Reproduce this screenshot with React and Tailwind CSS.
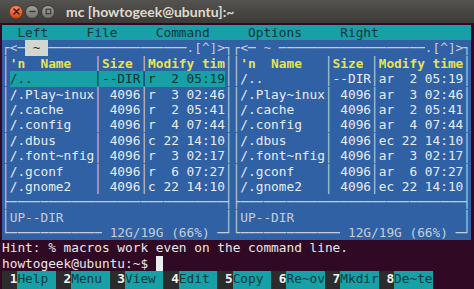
const BG_TERM = 'bg-[#300a24]';

// segment styles
const B = 'bg-[#3061a5] text-[#c6cdd9]';
const F = 'bg-[#3061a5] text-[#e8ecf1]';
const H = 'bg-[#3061a5] text-[#e9e154] font-bold';
const SEL = 'bg-[#17a1a6] text-[#0f3238]';
const TAB = 'bg-[#d3d7cf] text-[#2a2a2a]';
const MENU = 'bg-[#17a1a6] text-[#10343a]';
const T = 'text-[#ebe6e9]';
const CUR = 'bg-[#ececec] text-[#ececec]';
const KEY = 'bg-[#2d2b2c] text-[#f4f4f4] font-bold';
const LBL = 'bg-[#17a1a6] text-[#0f3a40]';

const pad = (s, n) => s.padEnd(n, ' ');
const dash = (n) => '─'.repeat(n);

const files = [
  ['/.Play~inux', '4096', 'r  3 02:46', 'ar  3 02:46'],
  ['/.cache', '4096', 'r  2 05:41', 'ar  2 05:41'],
  ['/.config', '4096', 'r  4 07:44', 'ar  4 07:44'],
  ['/.dbus', '4096', 'c 22 14:10', 'ec 22 14:10'],
  ['/.font~nfig', '4096', 'r  3 02:17', 'ar  3 02:17'],
  ['/.gconf', '4096', 'r  6 07:27', 'ar  6 07:27'],
  ['/.gnome2', '4096', 'c 22 14:10', 'ec 22 14:10'],
];

function Row({ segs, last }) {
  const cells = [];
  segs.forEach(([text, cls], si) => {
    [...text].forEach((ch, ci) => {
      cells.push(
        <span key={`${si}-${ci}`} className={`block overflow-visible ${cls}`}>
          {ch === ' ' ? '\u00a0' : ch}
        </span>
      );
    });
  });
  return (
    <div
      className={`grid grid-cols-[repeat(61,7.7px)] ${
        last ? 'flex-1 auto-rows-[minmax(15.4px,1fr)]' : 'h-[15.4px] auto-rows-[15.4px]'
      }`}
    >
      {cells}
    </div>
  );
}

function TitleBar() {
  return (
    <div className="h-[23px] flex items-center bg-gradient-to-b from-[#55534f] to-[#3c3b37]">
      <div className="flex items-center gap-[2px] ml-[9px]">
        <div className="w-[14px] h-[14px] rounded-full bg-gradient-to-b from-[#f58a5c] to-[#dd4814] border border-[#8a3414] flex items-center justify-center">
          <svg width="7" height="7" viewBox="0 0 7 7">
            <path d="M1 1L6 6M6 1L1 6" stroke="#4a1a08" strokeWidth="1.6" strokeLinecap="round" />
          </svg>
        </div>
        <div className="w-[14px] h-[14px] rounded-full bg-gradient-to-b from-[#a3a19b] to-[#75736e] border border-[#3a3935] flex items-center justify-center">
          <svg width="7" height="7" viewBox="0 0 7 7">
            <path d="M1 3.5H6" stroke="#3a3935" strokeWidth="1.6" strokeLinecap="round" />
          </svg>
        </div>
        <div className="w-[14px] h-[14px] rounded-full bg-gradient-to-b from-[#a3a19b] to-[#75736e] border border-[#3a3935] flex items-center justify-center">
          <svg width="7" height="7" viewBox="0 0 7 7">
            <rect x="1.2" y="1.2" width="4.6" height="4.6" fill="none" stroke="#3a3935" strokeWidth="1.2" />
          </svg>
        </div>
      </div>
      <span className="ml-[11px] text-[14px] font-bold text-[#dfdbd2] font-['Lato',sans-serif] leading-none">
        mc [howtogeek@ubuntu]:~
      </span>
    </div>
  );
}

export default function App() {
  const rows = [];

  rows.push([[pad('  Left     File     Command     Options     Right', 61), MENU]]);

  rows.push([
    ['┌<─', B], [' ~ ', TAB], [dash(18), B], ['.[^]>┐', B],
    ['┌<─ ~ ', B], [dash(19), B], ['.[^]>┐', B],
  ]);

  rows.push([
    ['│', B], [pad("'n  Name", 11), H], ['│', B], ['Size ', H], ['│', B], ['Modify tim', H], ['│', B],
    ['│', B], [pad("'n  Name", 11), H], ['│', B], ['Size ', H], ['│', B], ['Modify time', H], ['│', B],
  ]);

  rows.push([
    ['│', B], [pad('/..', 11), SEL], ['│', SEL], ['--DIR', SEL], ['│', SEL], ['r  2 05:19', SEL], ['│', B],
    ['│', B], [pad('/..', 11), F], ['│', B], ['--DIR', F], ['│', B], ['ar  2 05:19', F], ['│', B],
  ]);

  files.forEach(([name, size, t1, t2]) => {
    rows.push([
      ['│', B], [pad(name, 11), F], ['│', B], [size.padStart(5), F], ['│', B], [t1, F], ['│', B],
      ['│', B], [pad(name, 11), F], ['│', B], [size.padStart(5), F], ['│', B], [t2, F], ['│', B],
    ]);
  });

  rows.push([['├' + dash(28) + '┤', B], ['├' + dash(29) + '┤', B]]);

  rows.push([
    ['│', B], [pad('UP--DIR', 28), B], ['│', B],
    ['│', B], [pad('UP--DIR', 29), B], ['│', B],
  ]);

  rows.push([
    ['└' + dash(12), B], [' 12G/19G (66%) ', B], ['─┘', B],
    ['└' + dash(13), B], [' 12G/19G (66%) ', B], ['─┘', B],
  ]);

  rows.push([[pad('Hint: % macros work even on the command line.', 61), T]]);

  rows.push([['howtogeek@ubuntu:~$ ', T], [' ', CUR], [pad('', 40), T]]);

  const keys = [
    [' 1', 'Help '], [' 2', 'Menu '], [' 3', 'View '], [' 4', 'Edit '],
    [' 5', 'Copy '], [' 6', 'Re~ov'], [' 7', 'Mkdir'], [' 8', 'De~te'],
  ];
  const keyRow = [];
  keys.forEach(([n, l]) => {
    keyRow.push([n, KEY]);
    keyRow.push([l, LBL]);
  });
  keyRow.push(['     ', '']);

  return (
    <div className={`w-[474px] h-[289px] overflow-hidden flex flex-col ${BG_TERM}`}>
      <TitleBar />
      <div className="flex-1 flex flex-col pt-[2px] pl-[2px] font-['DejaVu_Sans_Mono',monospace] text-[12.8px] leading-[15.4px]">
        {rows.map((segs, i) => (
          <Row key={i} segs={segs} />
        ))}
        <Row segs={keyRow} last />
      </div>
    </div>
  );
}
